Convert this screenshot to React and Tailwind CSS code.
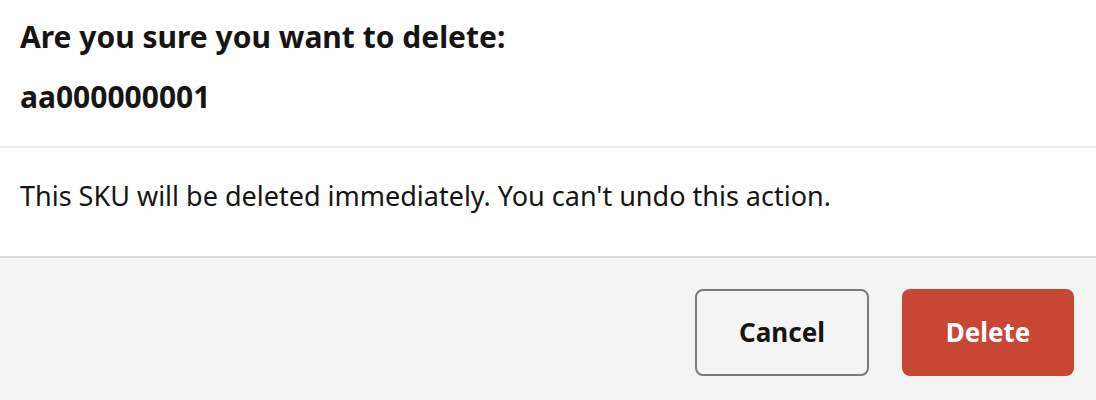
export default function App() {
  return (
    <div className="w-[1096px] h-[400px] bg-white flex flex-col overflow-hidden" style={{ fontFamily: '"Noto Sans", "Open Sans", sans-serif' }}>
      <div className="h-[148px] border-b-2 border-[#ebebeb] px-[20px] pt-[19px] shrink-0">
        <div className="text-[30px] leading-[36px] font-bold text-[#161513]">Are you sure you want to delete:</div>
        <div className="text-[30px] leading-[36px] font-bold text-[#161513] mt-[24px]">aa000000001</div>
      </div>
      <div className="h-[110px] border-b-2 border-[#dcdcdc] px-[20px] pt-[28px] shrink-0">
        <div className="text-[27px] leading-normal text-[#161513]">This SKU will be deleted immediately. You can't undo this action.</div>
      </div>
      <div className="flex-1 bg-[#f4f4f4] flex justify-end items-start gap-[33px] pt-[31px] pr-[22px]">
        <button className="w-[174px] h-[87px] rounded-[8px] border-2 border-[#7a7a7a] bg-[#f4f4f4] text-[26px] font-bold text-[#161513]">Cancel</button>
        <button className="w-[172px] h-[87px] rounded-[8px] bg-[#c74634] text-[26px] font-bold text-white">Delete</button>
      </div>
    </div>
  );
}
